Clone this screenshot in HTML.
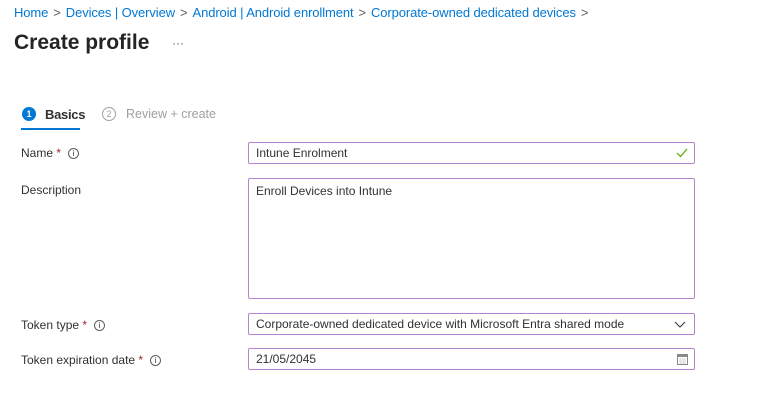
<!DOCTYPE html>
<html><head><style>
body{margin:0;width:768px;height:407px;background:#fff;font-family:"Liberation Sans",sans-serif;color:#323130;position:relative;overflow:hidden}
.a{position:absolute;white-space:nowrap}
.bc{top:5px;left:14px;font-size:13px;color:#0078d4;letter-spacing:-0.1px}
.bc span{color:#605e5c;margin:0 5px}
.t{top:31px;left:14px;font-size:21px;font-weight:bold;color:#252423}
.lbl{font-size:12px;left:21px;color:#323130}
.req{color:#a4262c}
.i{display:inline-block;width:9px;height:9px;border:1px solid #605e5c;border-radius:50%;font-size:8px;line-height:9px;text-align:center;margin-left:7px;vertical-align:1px}
.box{position:absolute;left:248px;width:447px;border:1px solid #b784cf;border-radius:2px;box-sizing:border-box;font-size:12px;padding:0 7px;color:#323130}
</style></head><body>
<div class="a bc">Home<span>&gt;</span>Devices | Overview<span>&gt;</span>Android | Android enrollment<span>&gt;</span>Corporate-owned dedicated devices<span>&gt;</span></div>
<div class="a t">Create profile</div>
<div class="a" style="top:36px;left:172px;font-size:12px;color:#605e5c">···</div>
<div class="a" style="top:107px;left:22px;width:14px;height:14px;border-radius:50%;background:#0078d4;color:#fff;font-size:9px;font-weight:bold;text-align:center;line-height:14px">1</div>
<div class="a" style="top:107px;left:45px;font-size:13px;font-weight:bold;color:#323130;letter-spacing:-0.3px">Basics</div>
<div class="a" style="top:128px;left:21px;width:59px;height:2px;background:#0078d4"></div>
<div class="a" style="top:107px;left:102px;width:12px;height:12px;border-radius:50%;border:1px solid #a19f9d;color:#a19f9d;font-size:9px;text-align:center;line-height:12px">2</div>
<div class="a" style="top:107px;left:126px;font-size:12.5px;color:#a19f9d">Review + create</div>

<div class="a lbl" style="top:146px">Name <span class="req">*</span><span class="i">i</span></div>
<div class="box" style="top:142px;height:22px;line-height:20px">Intune Enrolment<svg style="position:absolute;right:6px;top:5px" width="12" height="10" viewBox="0 0 12 10"><path d="M1 5l3.5 3.5L11 1" fill="none" stroke="#57a300" stroke-width="1.2"/></svg></div>
<div class="a lbl" style="top:183px">Description</div>
<div class="box" style="top:178px;height:121px;padding-top:5px">Enroll Devices into Intune</div>
<div class="a lbl" style="top:318px">Token type <span class="req">*</span><span class="i">i</span></div>
<div class="box" style="top:313px;height:22px;line-height:20px">Corporate-owned dedicated device with Microsoft Entra shared mode<svg style="position:absolute;right:8px;top:7px" width="12" height="7" viewBox="0 0 12 7"><path d="M1 1l5 5 5-5" fill="none" stroke="#323130" stroke-width="1"/></svg></div>
<div class="a lbl" style="top:353px">Token expiration date <span class="req">*</span><span class="i">i</span></div>
<div class="box" style="top:348px;height:22px;line-height:20px">21/05/2045<svg style="position:absolute;right:6px;top:5px" width="11" height="11" viewBox="0 0 11 11"><rect x="0.5" y="0.5" width="10" height="10" fill="none" stroke="#8a8886"/><rect x="0.5" y="0.5" width="10" height="2.5" fill="#8a8886"/><path d="M2 5h7M2 7h7M2 9h7M4 4v6M7 4v6" stroke="#c8c6c4" stroke-width="0.6"/></svg></div>
</body></html>
